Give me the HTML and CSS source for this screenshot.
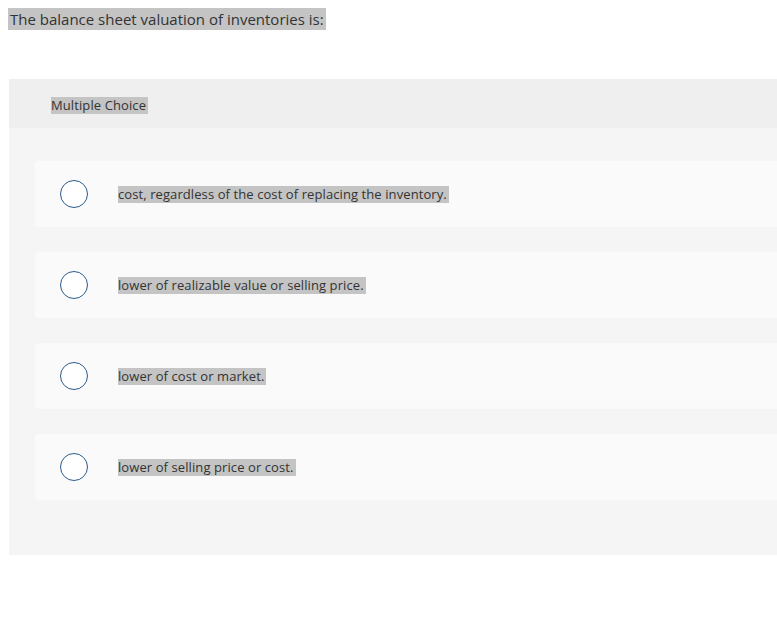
FILE: index.html
```html
<!DOCTYPE html>
<html>
<head>
<meta charset="utf-8">
<link rel="stylesheet" href="styles.css">
</head>
<body>
<div class="page">
  <p class="question"><span class="hl">The balance sheet valuation of inventories is:</span></p>
  <section class="mc">
    <header class="mc-head"><span class="hl">Multiple Choice</span></header>
    <div class="mc-body">
      <div class="opt"><span class="radio"></span><span class="hl">cost, regardless of the cost of replacing the inventory.</span></div>
      <div class="opt"><span class="radio"></span><span class="hl">lower of realizable value or selling price.</span></div>
      <div class="opt"><span class="radio"></span><span class="hl">lower of cost or market.</span></div>
      <div class="opt"><span class="radio"></span><span class="hl">lower of selling price or cost.</span></div>
    </div>
  </section>
</div>
</body>
</html>
```
FILE: styles.css
```css
html, body { margin: 0; padding: 0; background: #fff; overflow: hidden; }
body { font-family: "Open Sans", "Liberation Sans", Arial, sans-serif; color: #333; }
.page { padding: 8px 0 0 8px; }
.hl { background: #c4c4c4; }
.question { margin: 0; font-size: 15px; line-height: 22px; height: 22px; }
.question .hl { padding: 0 2px 0 2px; display: inline-block; }
.mc { margin-top: 49px; margin-left: 1px; }
.mc-head { background: #efefef; height: 49px; box-sizing: border-box; padding: 18px 0 0 42px; font-size: 13px; line-height: 17px; letter-spacing: 0.1px; }
.mc-head .hl { display: inline-block; padding: 0 2px 0 0; }
.mc-body { background: #f5f5f5; padding: 33px 0 55px 26px; display: flex; flex-direction: column; gap: 25px; }
.opt { background: #fafafa; border-radius: 4px 0 0 4px; height: 66px; display: flex; align-items: center; padding-left: 25px; font-size: 13px; line-height: 17px; letter-spacing: 0.09px; }
.radio { width: 26px; height: 26px; border: 1.5px solid #2b5b8c; border-radius: 50%; background: #fff; flex: none; margin-right: 30px; }
.opt .hl { padding: 0 2px 0 0; }
```
